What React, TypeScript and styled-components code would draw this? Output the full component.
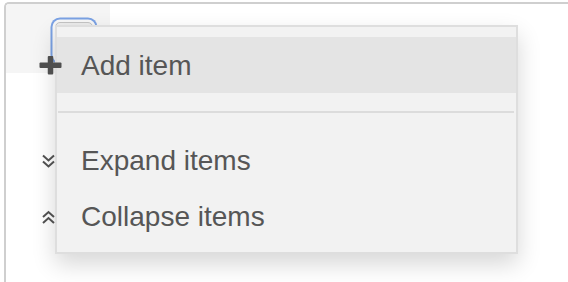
import React from "react";
import styled, { createGlobalStyle } from "styled-components";

const GlobalStyle = createGlobalStyle`
  html, body {
    margin: 0;
    padding: 0;
    background: #ffffff;
    overflow: hidden;
  }
  body {
    font-family: "Liberation Sans", Arial, Helvetica, sans-serif;
  }
`;

// outer panel: only its top and left edges show in the shot
const Frame = styled.div`
  position: relative;
  box-sizing: border-box;
  margin: 2px 0 0 4px;
  width: calc(100vw - 4px);
  height: calc(100vh - 2px);
  border: 2px solid #cfcfcf;
  border-right: none;
  border-bottom: none;
  border-top-left-radius: 5px;
  background: #ffffff;
`;

const Toolbar = styled.div`
  display: flex;
  align-items: flex-start;
  width: 104px;
  height: 69px;
  padding: 18px 0 0 49px;
  box-sizing: border-box;
  background: #f5f5f5;
  border-top-left-radius: 3px;
`;

const ToggleButton = styled.div`
  box-sizing: border-box;
  width: 38px;
  height: 38px;
  border: 1.5px solid #c4c4c4;
  border-radius: 5px;
  background: #ececec;
  box-shadow: 0 0 0 2.5px #f7f7f7, 0 0 0 4.5px #7ba2e4;
`;

const Menu = styled.div`
  position: absolute;
  left: 49px;
  top: 21px;
  width: 463px;
  box-sizing: border-box;
  padding: 10px 0 8px;
  border: 2px solid #dedede;
  background: #f2f2f2;
  box-shadow: 0 10px 22px rgba(0, 0, 0, 0.16);
`;

const Item = styled.div<{ $active?: boolean }>`
  display: flex;
  align-items: center;
  height: 56px;
  padding-top: 1px;
  box-sizing: border-box;
  background: ${(p) => (p.$active ? "#e4e4e4" : "transparent")};
`;

const IconSlot = styled.span`
  display: flex;
  width: 24px;
  height: 24px;
  margin-left: -19px;
  color: #4f4f4f;
`;

const Label = styled.span`
  margin-left: 19px;
  font-size: 28px;
  line-height: 52px;
  color: #565656;
`;

const Separator = styled.div`
  height: 2px;
  margin: 18px 2px 19px 1px;
  background: #dcdcdc;
`;

const PlusIcon = () => (
  <svg width="24" height="24" viewBox="0 0 24 24" fill="currentColor">
    <rect x="1.5" y="8.5" width="22" height="5.5" rx="1" />
    <rect x="9.75" y="2" width="5.5" height="18.5" rx="1" />
  </svg>
);

const ChevronsDown = () => (
  <svg width="24" height="24" viewBox="0 0 24 24" fill="none" stroke="currentColor" strokeWidth="2">
    <path d="M5 6.5 L10.5 11.5 L16 6.5 M5 12.5 L10.5 17.5 L16 12.5" />
  </svg>
);

const ChevronsUp = () => (
  <svg width="24" height="24" viewBox="0 0 24 24" fill="none" stroke="currentColor" strokeWidth="2">
    <path d="M5 12 L10.5 7 L16 12 M5 18 L10.5 13 L16 18" />
  </svg>
);

export default function App() {
  return (
    <>
      <GlobalStyle />
      <Frame>
        <Toolbar>
          <ToggleButton />
        </Toolbar>
        <Menu>
          <Item $active>
            <IconSlot>
              <PlusIcon />
            </IconSlot>
            <Label>Add item</Label>
          </Item>
          <Separator />
          <Item>
            <IconSlot>
              <ChevronsDown />
            </IconSlot>
            <Label>Expand items</Label>
          </Item>
          <Item>
            <IconSlot>
              <ChevronsUp />
            </IconSlot>
            <Label>Collapse items</Label>
          </Item>
        </Menu>
      </Frame>
    </>
  );
}
